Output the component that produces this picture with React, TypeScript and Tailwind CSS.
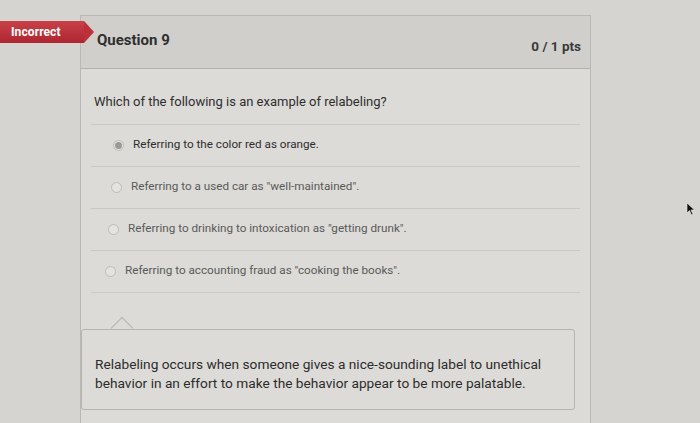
import React from 'react';

const answers = [
  { text: 'Referring to the color red as orange.', selected: true, indent: 'pl-[22px]' },
  { text: 'Referring to a used car as "well-maintained".', selected: false, indent: 'pl-[20px]' },
  { text: 'Referring to drinking to intoxication as "getting drunk".', selected: false, indent: 'pl-[17px]' },
  { text: 'Referring to accounting fraud as "cooking the books".', selected: false, indent: 'pl-[14px]' },
];

const Radio = ({ selected }: { selected: boolean }) => (
  <span className="relative w-[11px] h-[11px] rounded-full border border-[#bdbcb8] bg-[#e4e3e0] shrink-0 flex items-center justify-center">
    {selected && <span className="w-[7px] h-[7px] rounded-full bg-[#9a9996]" />}
  </span>
);

export default function App() {
  return (
    <div
      className="relative w-[700px] h-[423px] overflow-hidden bg-[#d5d4d0] flex"
      style={{ fontFamily: 'Roboto, "Liberation Sans", sans-serif' }}
    >
      {/* left gutter */}
      <div className="w-[80px] shrink-0" />

      {/* Incorrect badge */}
      <div className="absolute left-0 top-[21px] h-[22px] w-[94px] flex items-center">
        <div className="h-full w-[84px] bg-gradient-to-b from-[#c94048] to-[#ad2630] flex items-center pl-[11px]">
          <span className="text-white text-[12px] font-bold tracking-[0.1px]">Incorrect</span>
        </div>
        <div className="h-0 w-0 border-y-[11px] border-y-transparent border-l-[10px] border-l-[#bb3039]" />
      </div>

      {/* card */}
      <div className="w-[511px] mt-[15px] flex flex-col border-l border-r border-t border-[#b9b8b4] bg-[#dcdbd7]">
        <div className="h-[53px] shrink-0 bg-[#d0cfcb] border-b border-[#b3b2ae] flex items-center justify-between pl-[16px] pr-[9px]">
          <span className="text-[15px] font-bold text-[#2f2f2f] mt-[-4px]">Question 9</span>
          <span className="text-[13.5px] font-bold text-[#3a3a3a] mt-[8px]">0 / 1 pts</span>
        </div>

        <div className="pl-[13px] pt-[23px] text-[13px] text-[#2f2f2f]">
          Which of the following is an example of relabeling?
        </div>

        <div className="mt-[12px] ml-[10px] mr-[10px] flex flex-col">
          {answers.map((a, i) => (
            <div
              key={i}
              className={`h-[42px] border-t border-[#c9c8c4] flex items-center gap-[9px] ${a.indent}`}
            >
              <Radio selected={a.selected} />
              <span
                className={`text-[11.7px] ${a.selected ? 'text-[#2e2e2e]' : 'text-[#5a5a5a]'}`}
              >
                {a.text}
              </span>
            </div>
          ))}
          <div className="border-t border-[#cbcac6]" />
        </div>

        {/* comment */}
        <div className="relative mt-[36px] mr-[15px] ml-0">
          <div className="absolute left-[33px] top-[-9px] w-[16px] h-[16px] rotate-45 bg-[#dcdbd7] border-l border-t border-[#b5b4b0]" />
          <div className="relative border border-[#b5b4b0] rounded-[3px] bg-[#dcdbd7] h-[81px] pl-[13px] pt-[25px] text-[13.7px] leading-[19px] text-[#2c2c2c]">
            <p>Relabeling occurs when someone gives a nice-sounding label to unethical</p>
            <p>behavior in an effort to make the behavior appear to be more palatable.</p>
          </div>
        </div>
      </div>

      {/* mouse cursor */}
      <svg className="absolute left-[686px] top-[202px]" width="10" height="14" viewBox="0 0 10 14">
        <path d="M1 1 L1 11 L3.5 8.5 L5.5 13 L7 12.3 L5 8 L8.5 8 Z" fill="#111" stroke="#eee" strokeWidth="0.6" />
      </svg>
    </div>
  );
}
